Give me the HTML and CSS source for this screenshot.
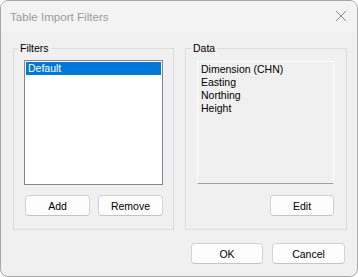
FILE: index.html
```html
<!DOCTYPE html>
<html>
<head>
<meta charset="utf-8">
<link rel="stylesheet" href="styles.css">
</head>
<body>
<div class="window">
  <div class="titlebar">
    <span class="title">Table Import Filters</span>
    <svg class="close" width="12" height="12" viewBox="0 0 12 12"><path d="M1 1 L11 11 M11 1 L1 11" stroke="#8a8a8a" stroke-width="1" fill="none"/></svg>
  </div>
  <div class="content">
    <div class="groups">
      <fieldset class="group filters">
        <legend>Filters</legend>
        <div class="listbox">
          <div class="item selected">Default</div>
        </div>
        <div class="btnrow">
          <button class="btn">Add</button>
          <button class="btn">Remove</button>
        </div>
      </fieldset>
      <fieldset class="group data">
        <legend>Data</legend>
        <div class="readonly">
          <div class="line">Dimension (CHN)</div>
          <div class="line">Easting</div>
          <div class="line">Northing</div>
          <div class="line">Height</div>
        </div>
        <div class="btnrow end">
          <button class="btn">Edit</button>
        </div>
      </fieldset>
    </div>
    <div class="footer">
      <button class="btn wide">OK</button>
      <button class="btn wide cancel">Cancel</button>
    </div>
  </div>
</div>
</body>
</html>
```
FILE: styles.css
```css
html, body {
  margin: 0;
  padding: 0;
  background: #ffffff;
}
body {
  width: 358px;
  height: 277px;
  font-family: "Liberation Sans", Arial, sans-serif;
  font-size: 10.5px;
  color: #000;
}
.window {
  box-sizing: border-box;
  width: 358px;
  height: 277px;
  border: 1px solid #a8a8a8;
  border-radius: 8px;
  background: #f0f0f0;
  overflow: hidden;
  display: flex;
  flex-direction: column;
}
.titlebar {
  height: 30px;
  flex: none;
  background: #f3f3f3;
  display: flex;
  align-items: center;
  justify-content: space-between;
  padding: 0 10px 1px 9px;
}
.title {
  font-size: 11.6px;
  color: #9b9b9b;
}
.close {
  margin-right: 0px;
  margin-top: -1px;
}
.content {
  flex: 1;
  display: flex;
  flex-direction: column;
  padding: 10px 10px 0 12px;
}
.groups {
  display: flex;
  gap: 11px;
}
.group {
  margin: 0;
  border: 1px solid #dcdcdc;
  padding: 5px 10px 13px 10px;
  display: flex;
  flex-direction: column;
  min-width: 0;
}
.group legend {
  padding: 0 2px;
  margin-left: -6px;
  line-height: 13px;
  font-size: 10.5px;
}
.filters {
  width: 161px;
  box-sizing: border-box;
}
.data {
  width: 162px;
  box-sizing: border-box;
  padding-left: 11px;
  padding-right: 12px;
}
.listbox {
  box-sizing: border-box;
  height: 125px;
  border: 1px solid #828790;
  background: #ffffff;
  padding: 1px;
}
.item {
  height: 13px;
  line-height: 13px;
  padding-left: 2px;
}
.item.selected {
  background: #0078d7;
  color: #ffffff;
}
.readonly {
  box-sizing: border-box;
  height: 123px;
  margin-top: 1px;
  border: 1px solid #ffffff;
  border-bottom-color: #a0a0a0;
  background: #f0f0f0;
  padding: 1px 3px;
}
.line {
  line-height: 13px;
}
.btnrow {
  display: flex;
  gap: 8px;
  margin-top: 10px;
  padding-left: 1px;
}
.btnrow.end {
  justify-content: flex-end;
  margin-top: 11px;
}
.btn {
  box-sizing: border-box;
  width: 65px;
  height: 21px;
  padding: 0;
  border: 1px solid #d3d3d3;
  border-bottom-color: #c4c4c4;
  border-radius: 4px;
  background: #fdfdfd;
  font-family: "Liberation Sans", Arial, sans-serif;
  font-size: 10.5px;
  color: #000;
}
.data .btn {
  width: 64px;
}
.footer {
  display: flex;
  justify-content: flex-end;
  gap: 9px;
  margin-top: 13px;
  padding-right: 2px;
}
.btn.wide {
  width: 72px;
}
.btn.wide.cancel {
  width: 73px;
}
```
